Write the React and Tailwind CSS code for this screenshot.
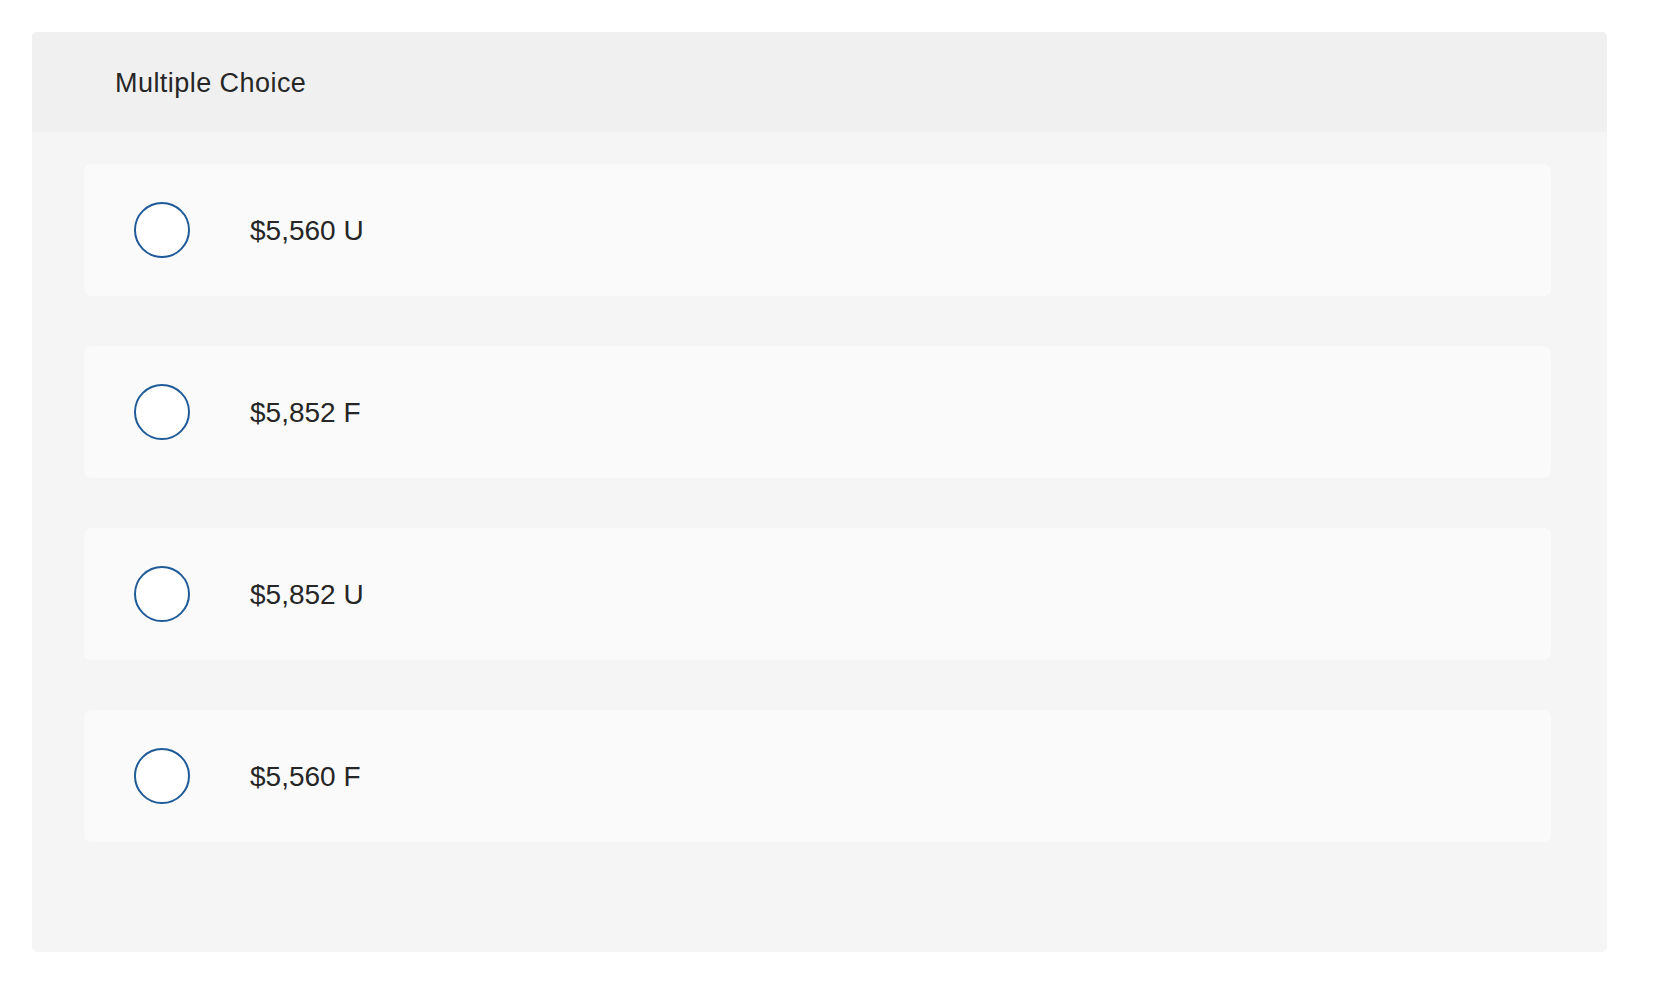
import React, { useState } from 'react';

const options = ['$5,560 U', '$5,852 F', '$5,852 U', '$5,560 F'];

const App = () => {
    const [selected, setSelected] = useState(null);

    return (
        <div className="min-h-screen bg-white pt-[32px] pl-[32px] font-['Liberation_Sans',Arial,sans-serif]">
            <div className="w-[1575px] h-[920px] rounded-[5px] overflow-hidden bg-[#f5f5f5] flex flex-col">
                <div className="h-[100px] shrink-0 bg-[#f0f0f0] flex items-center pl-[83px] pt-[2px]">
                    <h2 className="text-[27px] leading-none tracking-[0.45px] text-[#262626]">Multiple Choice</h2>
                </div>
                <div className="flex flex-col gap-[50px] pt-[32px] pl-[52px] pr-[56px]">
                    {options.map((opt, i) => (
                        <label
                            key={opt + i}
                            onClick={() => setSelected(i)}
                            className="h-[132px] rounded-[7px] bg-[#fafafa] flex items-center pl-[50px] cursor-pointer"
                        >
                            <span className="w-[56px] h-[56px] rounded-full border-2 border-[#1f5b98] bg-white flex items-center justify-center shrink-0">
                                {selected === i && <span className="w-[28px] h-[28px] rounded-full bg-[#1f5b98]" />}
                            </span>
                            <span className="ml-[60px] pt-[2px] text-[28px] leading-none text-[#262626]">{opt}</span>
                        </label>
                    ))}
                </div>
            </div>
        </div>
    );
};

export default App;
